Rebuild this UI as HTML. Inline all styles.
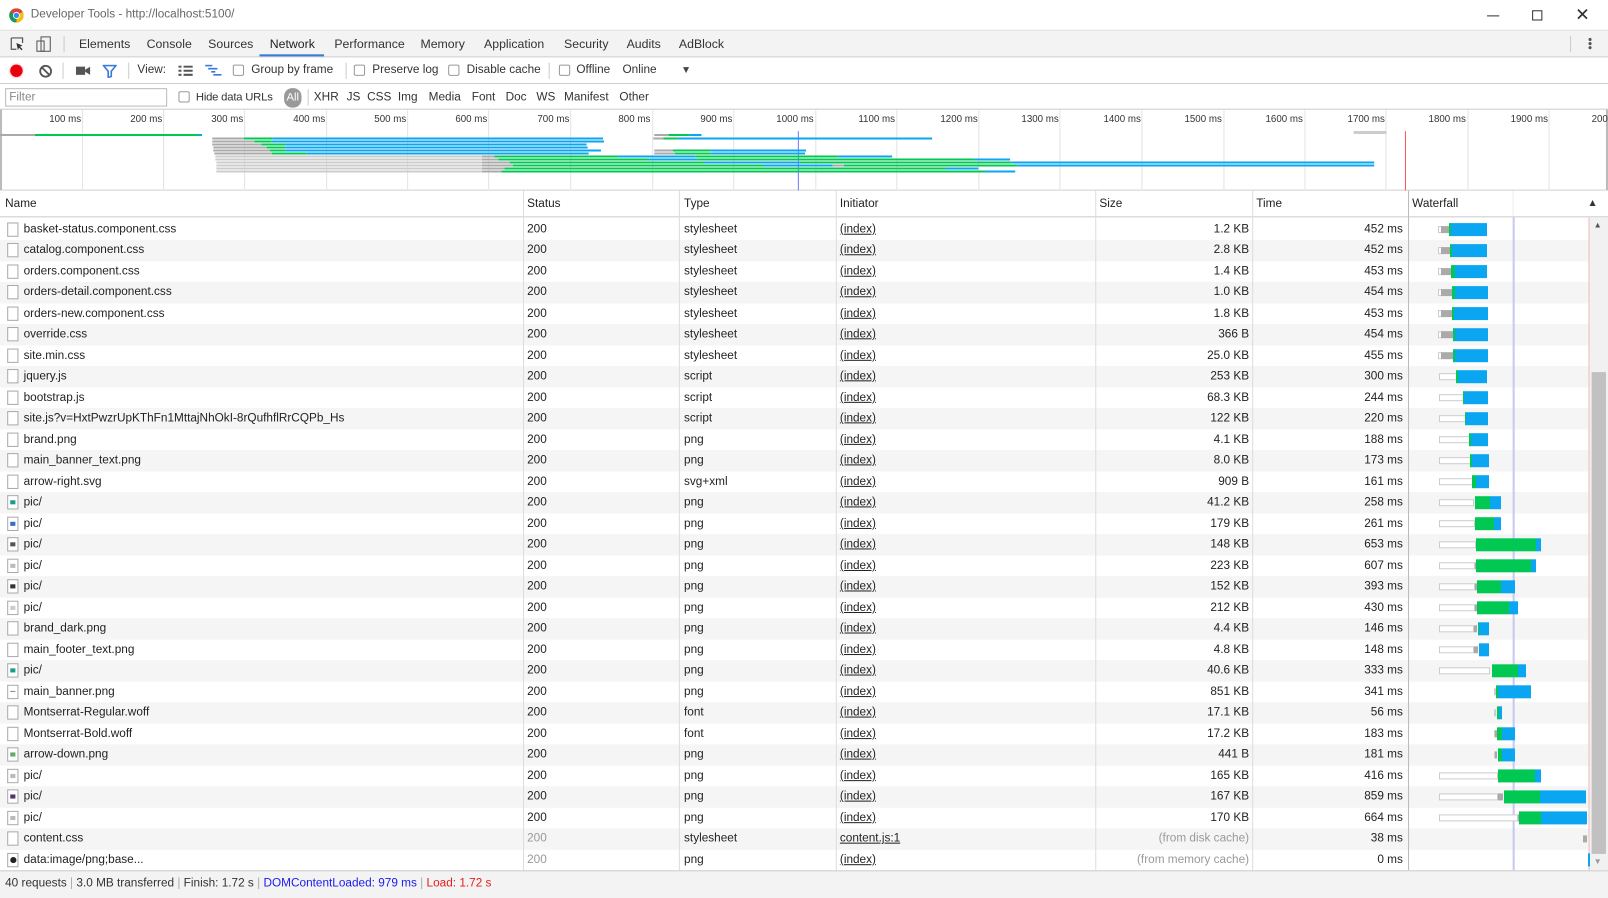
<!DOCTYPE html>
<html><head><meta charset="utf-8"><style>
*{box-sizing:border-box;margin:0;padding:0}
body{width:1608px;height:898px;overflow:hidden;background:#fff;font-family:"Liberation Sans",sans-serif;font-size:11.5px;color:#222;position:relative}
#c{position:absolute;left:0;top:0;width:1568px;height:876px;transform:scale(1.02551,1.02511);transform-origin:0 0}
.a{position:absolute;white-space:nowrap}
.t{position:absolute;top:36px;font-size:12px;color:#333}
.tb{position:absolute;top:62px;font-size:11.5px;color:#333}
.cb{position:absolute;width:11px;height:11px;border:1px solid #999;border-radius:2px;background:#fff}
.sep{position:absolute;width:1px;background:#ccc}
.ft{position:absolute;top:89px;font-size:11.5px;color:#333}
.row{position:absolute;left:0;width:1550px;height:20.5px;font-size:11.5px;line-height:20.5px}
.row.g{background:#f5f5f5}
.row span{position:absolute;top:0}
.n{left:23px}.s{left:514px}.ty{left:667px}.i{left:819px;text-decoration:underline}
.sz{right:332px;text-align:right}.tm{right:182px;text-align:right}
.ic{position:absolute;left:7px;top:3px;width:11px;height:14px;border:1px solid #aaa;background:#fff}
.ic i{position:absolute;left:2px;top:4px;width:5px;height:4px}
.gr{color:#999}
.ov{position:absolute;top:111px;font-size:9.5px;color:#333}
.h{position:absolute;top:193px;font-size:11.5px}
</style></head><body>
<div id="c">
<div class="a" style="left:0;top:0;width:1568px;height:30px;background:#fff;border-bottom:1px solid #ddd"></div>
<svg class="a" style="left:9px;top:8px" width="14" height="14" viewBox="0 0 14 14"><circle cx="7" cy="7" r="7" fill="#db4437"/><path d="M7 7 L13.1 3.5 A7 7 0 0 1 7 14Z" fill="#f4c20d"/><path d="M7 7 L7 14 A7 7 0 0 1 0.9 3.5Z" fill="#0f9d58"/><circle cx="7" cy="7" r="3.4" fill="#fff"/><circle cx="7" cy="7" r="2.6" fill="#4285f4"/></svg>
<div class="a" style="left:30px;top:8px;font-size:11.5px;color:#666">Developer Tools - http://localhost:5100/</div>
<div class="a" style="left:1450px;top:15px;width:12px;height:1px;background:#333"></div>
<div class="a" style="left:1494px;top:10px;width:10px;height:10px;border:1px solid #333"></div>
<div class="a" style="left:1536px;top:5px;font-size:17px;color:#333">✕</div>
<div class="a" style="left:0;top:30px;width:1568px;height:26px;background:#f3f3f3;border-bottom:1px solid #ccc"></div>
<svg class="a" style="left:10px;top:36px" width="14" height="14" viewBox="0 0 14 14"><path d="M1 1h11v5M1 1v11h5" fill="none" stroke="#555" stroke-width="1.2"/><path d="M6 6l6 2.5-2.5 1L12 12l-1 1-2.5-2.5-1 2.5z" fill="#333"/></svg>
<svg class="a" style="left:35px;top:35px" width="16" height="16" viewBox="0 0 16 16"><rect x="1" y="5" width="7" height="10" fill="none" stroke="#555"/><rect x="5" y="1" width="9" height="14" fill="none" stroke="#555"/></svg>
<div class="sep" style="left:62px;top:35px;height:16px"></div>
<div class="t" style="left:77px">Elements</div><div class="t" style="left:143px">Console</div><div class="t" style="left:203px">Sources</div><div class="t" style="left:263px;color:#222">Network</div><div class="t" style="left:326px">Performance</div><div class="t" style="left:410px">Memory</div><div class="t" style="left:472px">Application</div><div class="t" style="left:550px">Security</div><div class="t" style="left:611px">Audits</div><div class="t" style="left:662px">AdBlock</div>
<div class="a" style="left:253px;top:53px;width:63px;height:2px;background:#3879d9"></div>
<div class="sep" style="left:1531px;top:35px;height:16px"></div>
<div class="a" style="left:1549px;top:37px;width:3px;height:3px;background:#555;border-radius:50%;box-shadow:0 4px 0 #555,0 8px 0 #555"></div>
<div class="a" style="left:0;top:56px;width:1568px;height:26px;background:#fff;border-bottom:1px solid #ccc"></div>
<div class="a" style="left:10px;top:63px;width:12px;height:12px;border-radius:50%;background:#e8000d;box-shadow:0 0 2px #f66"></div>
<svg class="a" style="left:38px;top:63px" width="13" height="13" viewBox="0 0 13 13"><circle cx="6.5" cy="6.5" r="5.3" fill="none" stroke="#555" stroke-width="1.8"/><path d="M3 3l7 7" stroke="#555" stroke-width="1.8"/></svg>
<div class="sep" style="left:61px;top:61px;height:16px"></div>
<svg class="a" style="left:74px;top:64px" width="14" height="10" viewBox="0 0 14 10"><rect x="0" y="1" width="9" height="8" fill="#555"/><path d="M9 4l5-3v8l-5-3z" fill="#555"/></svg>
<svg class="a" style="left:100px;top:63px" width="14" height="13" viewBox="0 0 14 13"><path d="M1 1h12l-4.5 5.5v5l-3 1.5v-6.5z" fill="none" stroke="#3879d9" stroke-width="1.6"/></svg>
<div class="sep" style="left:125px;top:61px;height:16px"></div>
<div class="tb" style="left:134px">View:</div>
<svg class="a" style="left:174px;top:64px" width="14" height="11" viewBox="0 0 14 11"><path d="M0 1h3M5 1h9M0 5h3M5 5h9M0 9h3M5 9h9" stroke="#555" stroke-width="2"/></svg>
<svg class="a" style="left:200px;top:63px" width="16" height="12" viewBox="0 0 16 12"><path d="M0 1h7M3 4h9M6 7h4M8 10h8" stroke="#3879d9" stroke-width="1.6"/></svg>
<div class="cb" style="left:227px;top:63px"></div><div class="tb" style="left:245px">Group by frame</div>
<div class="sep" style="left:337px;top:61px;height:16px"></div>
<div class="cb" style="left:345px;top:63px"></div><div class="tb" style="left:363px">Preserve log</div>
<div class="cb" style="left:437px;top:63px"></div><div class="tb" style="left:455px">Disable cache</div>
<div class="sep" style="left:535px;top:61px;height:16px"></div>
<div class="cb" style="left:545px;top:63px"></div><div class="tb" style="left:562px">Offline</div>
<div class="tb" style="left:607px">Online</div>
<div class="tb" style="left:664px;font-size:10px;top:63px;color:#444">▼</div>
<div class="a" style="left:0;top:82px;width:1568px;height:25px;background:#fff;border-bottom:1px solid #ccc"></div>
<div class="a" style="left:5px;top:86px;width:158px;height:18px;border:1px solid #bbb;font-size:11.5px;color:#888;padding:2px 3px">Filter</div>
<div class="cb" style="left:174px;top:89px"></div><div class="ft" style="left:191px;font-size:11px;letter-spacing:-0.2px">Hide data URLs</div>
<div class="a" style="left:277px;top:86px;width:17px;height:19px;border-radius:8px;background:#999;color:#fff;font-size:11px;text-align:center;line-height:19px">All</div>
<div class="sep" style="left:300px;top:87px;height:16px"></div>
<div class="ft" style="left:306px">XHR</div><div class="ft" style="left:338px">JS</div><div class="ft" style="left:358px">CSS</div><div class="ft" style="left:388px">Img</div><div class="ft" style="left:418px">Media</div><div class="ft" style="left:460px">Font</div><div class="ft" style="left:493px">Doc</div><div class="ft" style="left:523px">WS</div><div class="ft" style="left:550px">Manifest</div><div class="ft" style="left:604px">Other</div>
<div class="a" style="left:0;top:107px;width:1568px;height:79px;border-left:2px solid #bbb;border-right:2px solid #bbb;border-bottom:1px solid #ccc"></div>
<div class="a" style="left:80px;top:107px;width:1px;height:79px;background:#e3e3e3;box-shadow:79px 0 #e3e3e3,158px 0 #e3e3e3,238px 0 #e3e3e3,317px 0 #e3e3e3,396px 0 #e3e3e3,476px 0 #e3e3e3,556px 0 #e3e3e3,635px 0 #e3e3e3,715px 0 #e3e3e3,794px 0 #e3e3e3,874px 0 #e3e3e3,953px 0 #e3e3e3,1033px 0 #e3e3e3,1113px 0 #e3e3e3,1192px 0 #e3e3e3,1271px 0 #e3e3e3,1351px 0 #e3e3e3,1430px 0 #e3e3e3"></div>
<div class="ov" style="left:48px">100 ms</div><div class="ov" style="left:127px">200 ms</div><div class="ov" style="left:206px">300 ms</div><div class="ov" style="left:286px">400 ms</div><div class="ov" style="left:365px">500 ms</div><div class="ov" style="left:444px">600 ms</div><div class="ov" style="left:524px">700 ms</div><div class="ov" style="left:603px">800 ms</div><div class="ov" style="left:683px">900 ms</div><div class="ov" style="left:757px">1000 ms</div><div class="ov" style="left:837px">1100 ms</div><div class="ov" style="left:917px">1200 ms</div><div class="ov" style="left:996px">1300 ms</div><div class="ov" style="left:1076px">1400 ms</div><div class="ov" style="left:1155px">1500 ms</div><div class="ov" style="left:1234px">1600 ms</div><div class="ov" style="left:1314px">1700 ms</div><div class="ov" style="left:1393px">1800 ms</div><div class="ov" style="left:1473px">1900 ms</div><div class="ov" style="left:1552px">200</div>
<div class="a" style="left:778px;top:128px;width:1px;height:58px;background:#77f"></div>
<div class="a" style="left:1370px;top:128px;width:1px;height:58px;background:#f55"></div>
<div class="a" style="left:0;top:186px;width:1568px;height:26px;background:#fff;border-bottom:1px solid #ccc"></div>
<div class="h" style="left:5px">Name</div><div class="h" style="left:514px">Status</div><div class="h" style="left:667px">Type</div><div class="h" style="left:819px">Initiator</div><div class="h" style="left:1072px">Size</div><div class="h" style="left:1225px">Time</div><div class="h" style="left:1377px">Waterfall</div>
<div class="a" style="left:1548px;top:193px;font-size:10px;color:#333">▲</div>
<div class="row" style="top:213.75px"><div class="ic"></div><span class="n">basket-status.component.css</span><span class="s">200</span><span class="ty">stylesheet</span><span class="i">(index)</span><span class="sz">1.2 KB</span><span class="tm">452 ms</span></div>
<div class="row g" style="top:234.25px"><div class="ic"></div><span class="n">catalog.component.css</span><span class="s">200</span><span class="ty">stylesheet</span><span class="i">(index)</span><span class="sz">2.8 KB</span><span class="tm">452 ms</span></div>
<div class="row" style="top:254.75px"><div class="ic"></div><span class="n">orders.component.css</span><span class="s">200</span><span class="ty">stylesheet</span><span class="i">(index)</span><span class="sz">1.4 KB</span><span class="tm">453 ms</span></div>
<div class="row g" style="top:275.25px"><div class="ic"></div><span class="n">orders-detail.component.css</span><span class="s">200</span><span class="ty">stylesheet</span><span class="i">(index)</span><span class="sz">1.0 KB</span><span class="tm">454 ms</span></div>
<div class="row" style="top:295.75px"><div class="ic"></div><span class="n">orders-new.component.css</span><span class="s">200</span><span class="ty">stylesheet</span><span class="i">(index)</span><span class="sz">1.8 KB</span><span class="tm">453 ms</span></div>
<div class="row g" style="top:316.25px"><div class="ic"></div><span class="n">override.css</span><span class="s">200</span><span class="ty">stylesheet</span><span class="i">(index)</span><span class="sz">366 B</span><span class="tm">454 ms</span></div>
<div class="row" style="top:336.75px"><div class="ic"></div><span class="n">site.min.css</span><span class="s">200</span><span class="ty">stylesheet</span><span class="i">(index)</span><span class="sz">25.0 KB</span><span class="tm">455 ms</span></div>
<div class="row g" style="top:357.25px"><div class="ic"></div><span class="n">jquery.js</span><span class="s">200</span><span class="ty">script</span><span class="i">(index)</span><span class="sz">253 KB</span><span class="tm">300 ms</span></div>
<div class="row" style="top:377.75px"><div class="ic"></div><span class="n">bootstrap.js</span><span class="s">200</span><span class="ty">script</span><span class="i">(index)</span><span class="sz">68.3 KB</span><span class="tm">244 ms</span></div>
<div class="row g" style="top:398.25px"><div class="ic"></div><span class="n">site.js?v=HxtPwzrUpKThFn1MttajNhOkI-8rQufhflRrCQPb_Hs</span><span class="s">200</span><span class="ty">script</span><span class="i">(index)</span><span class="sz">122 KB</span><span class="tm">220 ms</span></div>
<div class="row" style="top:418.75px"><div class="ic"></div><span class="n">brand.png</span><span class="s">200</span><span class="ty">png</span><span class="i">(index)</span><span class="sz">4.1 KB</span><span class="tm">188 ms</span></div>
<div class="row g" style="top:439.25px"><div class="ic"></div><span class="n">main_banner_text.png</span><span class="s">200</span><span class="ty">png</span><span class="i">(index)</span><span class="sz">8.0 KB</span><span class="tm">173 ms</span></div>
<div class="row" style="top:459.75px"><div class="ic"></div><span class="n">arrow-right.svg</span><span class="s">200</span><span class="ty">svg+xml</span><span class="i">(index)</span><span class="sz">909 B</span><span class="tm">161 ms</span></div>
<div class="row g" style="top:480.25px"><div class="ic"><i style="background:#1a9a8a"></i></div><span class="n">pic/</span><span class="s">200</span><span class="ty">png</span><span class="i">(index)</span><span class="sz">41.2 KB</span><span class="tm">258 ms</span></div>
<div class="row" style="top:500.75px"><div class="ic"><i style="background:#3b6fc4"></i></div><span class="n">pic/</span><span class="s">200</span><span class="ty">png</span><span class="i">(index)</span><span class="sz">179 KB</span><span class="tm">261 ms</span></div>
<div class="row g" style="top:521.25px"><div class="ic"><i style="background:#555"></i></div><span class="n">pic/</span><span class="s">200</span><span class="ty">png</span><span class="i">(index)</span><span class="sz">148 KB</span><span class="tm">653 ms</span></div>
<div class="row" style="top:541.75px"><div class="ic"><i style="background:#bbb"></i></div><span class="n">pic/</span><span class="s">200</span><span class="ty">png</span><span class="i">(index)</span><span class="sz">223 KB</span><span class="tm">607 ms</span></div>
<div class="row g" style="top:562.25px"><div class="ic"><i style="background:#333"></i></div><span class="n">pic/</span><span class="s">200</span><span class="ty">png</span><span class="i">(index)</span><span class="sz">152 KB</span><span class="tm">393 ms</span></div>
<div class="row" style="top:582.75px"><div class="ic"><i style="background:#ccc"></i></div><span class="n">pic/</span><span class="s">200</span><span class="ty">png</span><span class="i">(index)</span><span class="sz">212 KB</span><span class="tm">430 ms</span></div>
<div class="row g" style="top:603.25px"><div class="ic"></div><span class="n">brand_dark.png</span><span class="s">200</span><span class="ty">png</span><span class="i">(index)</span><span class="sz">4.4 KB</span><span class="tm">146 ms</span></div>
<div class="row" style="top:623.75px"><div class="ic"></div><span class="n">main_footer_text.png</span><span class="s">200</span><span class="ty">png</span><span class="i">(index)</span><span class="sz">4.8 KB</span><span class="tm">148 ms</span></div>
<div class="row g" style="top:644.25px"><div class="ic"><i style="background:#1a9a8a"></i></div><span class="n">pic/</span><span class="s">200</span><span class="ty">png</span><span class="i">(index)</span><span class="sz">40.6 KB</span><span class="tm">333 ms</span></div>
<div class="row" style="top:664.75px"><div class="ic"><i style="background:#888;height:1px;top:5px"></i></div><span class="n">main_banner.png</span><span class="s">200</span><span class="ty">png</span><span class="i">(index)</span><span class="sz">851 KB</span><span class="tm">341 ms</span></div>
<div class="row g" style="top:685.25px"><div class="ic"></div><span class="n">Montserrat-Regular.woff</span><span class="s">200</span><span class="ty">font</span><span class="i">(index)</span><span class="sz">17.1 KB</span><span class="tm">56 ms</span></div>
<div class="row" style="top:705.75px"><div class="ic"></div><span class="n">Montserrat-Bold.woff</span><span class="s">200</span><span class="ty">font</span><span class="i">(index)</span><span class="sz">17.2 KB</span><span class="tm">183 ms</span></div>
<div class="row g" style="top:726.25px"><div class="ic"><i style="background:#6a6"></i></div><span class="n">arrow-down.png</span><span class="s">200</span><span class="ty">png</span><span class="i">(index)</span><span class="sz">441 B</span><span class="tm">181 ms</span></div>
<div class="row" style="top:746.75px"><div class="ic"><i style="background:#bbb"></i></div><span class="n">pic/</span><span class="s">200</span><span class="ty">png</span><span class="i">(index)</span><span class="sz">165 KB</span><span class="tm">416 ms</span></div>
<div class="row g" style="top:767.25px"><div class="ic"><i style="background:#536"></i></div><span class="n">pic/</span><span class="s">200</span><span class="ty">png</span><span class="i">(index)</span><span class="sz">167 KB</span><span class="tm">859 ms</span></div>
<div class="row" style="top:787.75px"><div class="ic"><i style="background:#bbb"></i></div><span class="n">pic/</span><span class="s">200</span><span class="ty">png</span><span class="i">(index)</span><span class="sz">170 KB</span><span class="tm">664 ms</span></div>
<div class="row g" style="top:808.25px"><div class="ic"></div><span class="n">content.css</span><span class="s gr">200</span><span class="ty">stylesheet</span><span class="i">content.js:1</span><span class="sz gr">(from disk cache)</span><span class="tm">38 ms</span></div>
<div class="row" style="top:828.75px"><div class="ic"><i style="background:#222;border-radius:50%;width:6px;height:6px;top:3px"></i></div><span class="n">data:image/png;base...</span><span class="s gr">200</span><span class="ty">png</span><span class="i">(index)</span><span class="sz gr">(from memory cache)</span><span class="tm">0 ms</span></div>
<div class="a" style="left:510px;top:186px;width:1px;height:663px;background:#ddd;box-shadow:152px 0 #ddd,305px 0 #ddd,558px 0 #ddd,711px 0 #ddd"></div>
<div class="a" style="left:1373px;top:186px;width:1px;height:663px;background:#bbb"></div>
<div class="a" style="left:1475px;top:186px;width:1px;height:25px;background:#eee"></div>
<div class="a" style="left:1475px;top:212px;width:2px;height:637px;background:#c8c8f4"></div>
<div class="a" style="left:1549px;top:212px;width:1px;height:637px;background:#f2b8b8"></div>
<div class="a" style="left:1550px;top:212px;width:18px;height:637px;background:#f1f1f1"></div>
<div class="a" style="left:1552px;top:363px;width:14px;height:470px;background:#c1c1c1"></div>
<div class="a" style="left:1554px;top:215px;font-size:8px;color:#555">▲</div>
<div class="a" style="left:1554px;top:836px;font-size:8px;color:#999">▼</div>
<div class="a" style="left:0;top:849px;width:1568px;height:27px;background:#f3f3f3;border-top:1px solid #ccc"></div>
<div class="a" style="left:5px;top:856px;font-size:11.5px;color:#333">40 requests <span style="color:#aaa">|</span> 3.0 MB transferred <span style="color:#aaa">|</span> Finish: 1.72 s <span style="color:#aaa">|</span> <span style="color:#1a1aef">DOMContentLoaded: 979 ms</span> <span style="color:#aaa">|</span> <span style="color:#e51c1c">Load: 1.72 s</span></div>
</div>
<svg class="a" style="left:0;top:0" width="1608" height="898">
<g transform="scale(1.02551,1)">
<rect x="1320" y="131" width="32" height="3" fill="#ccc"/>
<g transform="translate(0,134)"><rect x="0" width="34" height="2" fill="#aaa"/><rect x="34" width="160" height="2" fill="#00c853"/><rect x="194" width="3" height="2" fill="#0ba6f2"/><rect x="638" width="14" height="2" fill="#aaa"/><rect x="652" width="20" height="2" fill="#00c853"/><rect x="672" width="12" height="2" fill="#0ba6f2"/></g>
<g transform="translate(0,137.5)"><rect x="207" width="31" height="2" fill="#aaa"/><rect x="238" width="28" height="2" fill="#00c853"/><rect x="266" width="322" height="2" fill="#0ba6f2"/><rect x="637" width="10" height="2" fill="#aaa"/><rect x="647" width="14" height="2" fill="#00c853"/><rect x="661" width="248" height="2" fill="#0ba6f2"/></g>
<g transform="translate(0,140.5)"><rect x="207" width="41" height="2" fill="#aaa"/><rect x="248" width="17" height="2" fill="#00c853"/><rect x="265" width="324" height="2" fill="#0ba6f2"/></g>
<g transform="translate(0,143.5)"><rect x="207" width="48" height="2" fill="#aaa"/><rect x="255" width="23" height="2" fill="#00c853"/><rect x="278" width="294" height="2" fill="#0ba6f2"/></g>
<g transform="translate(0,146.5)"><rect x="208" width="52" height="2" fill="#aaa"/><rect x="260" width="18" height="2" fill="#00c853"/><rect x="278" width="295" height="2" fill="#0ba6f2"/></g>
<g transform="translate(0,149.5)"><rect x="208" width="55" height="2" fill="#aaa"/><rect x="263" width="15" height="2" fill="#00c853"/><rect x="278" width="308" height="2" fill="#0ba6f2"/><rect x="638" width="18" height="2" fill="#aaa"/><rect x="656" width="37" height="2" fill="#00c853"/><rect x="693" width="93" height="2" fill="#0ba6f2"/></g>
<g transform="translate(0,152.5)"><rect x="209" width="56" height="2" fill="#aaa"/><rect x="265" width="34" height="2" fill="#00c853"/><rect x="299" width="275" height="2" fill="#0ba6f2"/><rect x="638" width="20" height="2" fill="#aaa"/><rect x="658" width="35" height="2" fill="#00c853"/><rect x="693" width="92" height="2" fill="#0ba6f2"/></g>
<g transform="translate(0,155.5)"><rect x="210" width="260" height="2" fill="#ccc"/><rect x="470" width="12" height="2" fill="#aaa"/><rect x="482" width="121" height="2" fill="#00c853"/><rect x="603" width="75" height="2" fill="#0ba6f2"/><rect x="678" width="139" height="2" fill="#00c853"/><rect x="817" width="53" height="2" fill="#0ba6f2"/></g>
<g transform="translate(0,158.5)"><rect x="210" width="260" height="2" fill="#ccc"/><rect x="470" width="16" height="2" fill="#aaa"/><rect x="486" width="147" height="2" fill="#00c853"/><rect x="633" width="47" height="2" fill="#0ba6f2"/><rect x="680" width="270" height="2" fill="#00c853"/><rect x="950" width="35" height="2" fill="#0ba6f2"/></g>
<g transform="translate(0,161.5)"><rect x="211" width="259" height="2" fill="#ccc"/><rect x="470" width="27" height="2" fill="#aaa"/><rect x="497" width="189" height="2" fill="#00c853"/><rect x="686" width="94" height="2" fill="#0ba6f2"/><rect x="780" width="206" height="2" fill="#00c853"/><rect x="986" width="354" height="2" fill="#0ba6f2"/></g>
<g transform="translate(0,164.5)"><rect x="211" width="259" height="2" fill="#ccc"/><rect x="470" width="30" height="2" fill="#aaa"/><rect x="500" width="245" height="2" fill="#00c853"/><rect x="745" width="67" height="2" fill="#0ba6f2"/><rect x="812" width="11" height="2" fill="#aaa"/><rect x="823" width="169" height="2" fill="#00c853"/><rect x="992" width="348" height="2" fill="#0ba6f2"/></g>
<g transform="translate(0,167.5)"><rect x="211" width="259" height="2" fill="#ccc"/><rect x="470" width="22" height="2" fill="#aaa"/><rect x="492" width="430" height="2" fill="#00c853"/><rect x="922" width="32" height="2" fill="#0ba6f2"/></g>
<g transform="translate(0,170.5)"><rect x="211" width="259" height="2" fill="#ccc"/><rect x="470" width="19" height="2" fill="#aaa"/><rect x="489" width="471" height="2" fill="#00c853"/><rect x="960" width="30" height="2" fill="#0ba6f2"/></g>
</g>
<defs><style>.o{fill:#fff;stroke:#ccc;stroke-width:1}.q{fill:#aaa}.G{fill:#00c853}.B{fill:#0ba6f2}</style></defs>
<g transform="translate(0,229.6)"><rect class="o" x="1438.5" y="-3" width="3" height="6"/><rect class="q" x="1441" y="-3.5" width="8" height="7"/><rect class="G" x="1449" y="-6.5" width="2" height="13"/><rect class="B" x="1451" y="-6.5" width="36" height="13"/></g>
<g transform="translate(0,250.6)"><rect class="o" x="1438.5" y="-3" width="3" height="6"/><rect class="q" x="1441" y="-3.5" width="9" height="7"/><rect class="G" x="1450" y="-6.5" width="2" height="13"/><rect class="B" x="1452" y="-6.5" width="35" height="13"/></g>
<g transform="translate(0,271.6)"><rect class="o" x="1438.5" y="-3" width="3" height="6"/><rect class="q" x="1441" y="-3.5" width="10" height="7"/><rect class="G" x="1451" y="-6.5" width="4" height="13"/><rect class="B" x="1455" y="-6.5" width="32" height="13"/></g>
<g transform="translate(0,292.6)"><rect class="o" x="1438.5" y="-3" width="3" height="6"/><rect class="q" x="1441" y="-3.5" width="11" height="7"/><rect class="G" x="1452" y="-6.5" width="3" height="13"/><rect class="B" x="1455" y="-6.5" width="33" height="13"/></g>
<g transform="translate(0,313.6)"><rect class="o" x="1438.5" y="-3" width="3" height="6"/><rect class="q" x="1441" y="-3.5" width="11" height="7"/><rect class="G" x="1452" y="-6.5" width="2" height="13"/><rect class="B" x="1454" y="-6.5" width="34" height="13"/></g>
<g transform="translate(0,334.7)"><rect class="o" x="1438.5" y="-3" width="3" height="6"/><rect class="q" x="1441" y="-3.5" width="12" height="7"/><rect class="G" x="1453" y="-6.5" width="2" height="13"/><rect class="B" x="1455" y="-6.5" width="33" height="13"/></g>
<g transform="translate(0,355.7)"><rect class="o" x="1438.5" y="-3" width="3" height="6"/><rect class="q" x="1441" y="-3.5" width="12" height="7"/><rect class="G" x="1453" y="-6.5" width="2" height="13"/><rect class="B" x="1455" y="-6.5" width="33" height="13"/></g>
<g transform="translate(0,376.7)"><rect class="o" x="1439.5" y="-3" width="17" height="6"/><rect class="G" x="1456" y="-6.5" width="2" height="13"/><rect class="B" x="1458" y="-6.5" width="29" height="13"/></g>
<g transform="translate(0,397.7)"><rect class="o" x="1439.5" y="-3" width="24" height="6"/><rect class="G" x="1463" y="-6.5" width="1" height="13"/><rect class="B" x="1464" y="-6.5" width="24" height="13"/></g>
<g transform="translate(0,418.7)"><rect class="o" x="1439.5" y="-3" width="26" height="6"/><rect class="G" x="1465" y="-6.5" width="1" height="13"/><rect class="B" x="1466" y="-6.5" width="22" height="13"/></g>
<g transform="translate(0,439.7)"><rect class="o" x="1439.5" y="-3" width="30" height="6"/><rect class="G" x="1469" y="-6.5" width="2" height="13"/><rect class="B" x="1471" y="-6.5" width="17" height="13"/></g>
<g transform="translate(0,460.7)"><rect class="o" x="1439.5" y="-3" width="31" height="6"/><rect class="G" x="1470" y="-6.5" width="2" height="13"/><rect class="B" x="1472" y="-6.5" width="17" height="13"/></g>
<g transform="translate(0,481.7)"><rect class="o" x="1439.5" y="-3" width="33" height="6"/><rect class="G" x="1472" y="-6.5" width="4" height="13"/><rect class="B" x="1476" y="-6.5" width="13" height="13"/></g>
<g transform="translate(0,502.7)"><rect class="o" x="1439.5" y="-3" width="34" height="6"/><rect class="G" x="1475" y="-6.5" width="15" height="13"/><rect class="B" x="1490" y="-6.5" width="11" height="13"/></g>
<g transform="translate(0,523.7)"><rect class="o" x="1439.5" y="-3" width="35" height="6"/><rect class="G" x="1475" y="-6.5" width="19" height="13"/><rect class="B" x="1494" y="-6.5" width="7" height="13"/></g>
<g transform="translate(0,544.8)"><rect class="o" x="1439.5" y="-3" width="36" height="6"/><rect class="G" x="1476" y="-6.5" width="60" height="13"/><rect class="B" x="1536" y="-6.5" width="5" height="13"/></g>
<g transform="translate(0,565.8)"><rect class="o" x="1439.5" y="-3" width="35" height="6"/><rect class="q" x="1475" y="-3.5" width="1" height="7"/><rect class="G" x="1476" y="-6.5" width="55" height="13"/><rect class="B" x="1531" y="-6.5" width="5" height="13"/></g>
<g transform="translate(0,586.8)"><rect class="o" x="1439.5" y="-3" width="35" height="6"/><rect class="q" x="1475" y="-3.5" width="2" height="7"/><rect class="G" x="1477" y="-6.5" width="24" height="13"/><rect class="B" x="1501" y="-6.5" width="14" height="13"/></g>
<g transform="translate(0,607.8)"><rect class="o" x="1439.5" y="-3" width="35" height="6"/><rect class="q" x="1475" y="-3.5" width="2" height="7"/><rect class="G" x="1477" y="-6.5" width="32" height="13"/><rect class="B" x="1509" y="-6.5" width="9" height="13"/></g>
<g transform="translate(0,628.8)"><rect class="o" x="1439.5" y="-3" width="34" height="6"/><rect class="q" x="1474" y="-3.5" width="3" height="7"/><rect class="G" x="1478" y="-6.5" width="1" height="13"/><rect class="B" x="1479" y="-6.5" width="10" height="13"/></g>
<g transform="translate(0,649.8)"><rect class="o" x="1439.5" y="-3" width="34" height="6"/><rect class="q" x="1474" y="-3.5" width="4" height="7"/><rect class="B" x="1479" y="-6.5" width="10" height="13"/></g>
<g transform="translate(0,670.8)"><rect class="o" x="1439.5" y="-3" width="50" height="6"/><rect class="G" x="1492" y="-6.5" width="26" height="13"/><rect class="B" x="1518" y="-6.5" width="8" height="13"/></g>
<g transform="translate(0,691.8)"><rect class="o" x="1494.5" y="-3" width="1" height="6"/><rect class="G" x="1496" y="-6.5" width="2" height="13"/><rect class="B" x="1498" y="-6.5" width="33" height="13"/></g>
<g transform="translate(0,712.8)"><rect class="o" x="1494.5" y="-3" width="1" height="6"/><rect class="G" x="1497" y="-6.5" width="2" height="13"/><rect class="B" x="1499" y="-6.5" width="3" height="13"/></g>
<g transform="translate(0,733.8)"><rect class="o" x="1494.5" y="-3" width="1" height="6"/><rect class="q" x="1495" y="-3.5" width="2" height="7"/><rect class="G" x="1497" y="-6.5" width="5" height="13"/><rect class="B" x="1502" y="-6.5" width="13" height="13"/></g>
<g transform="translate(0,754.9)"><rect class="o" x="1494.5" y="-3" width="1" height="6"/><rect class="q" x="1495" y="-3.5" width="2" height="7"/><rect class="G" x="1498" y="-6.5" width="4" height="13"/><rect class="B" x="1502" y="-6.5" width="13" height="13"/></g>
<g transform="translate(0,775.9)"><rect class="o" x="1439.5" y="-3" width="58" height="6"/><rect class="G" x="1498" y="-6.5" width="37" height="13"/><rect class="B" x="1535" y="-6.5" width="6" height="13"/></g>
<g transform="translate(0,796.9)"><rect class="o" x="1439.5" y="-3" width="58" height="6"/><rect class="q" x="1498" y="-3.5" width="5" height="7"/><rect class="G" x="1504" y="-6.5" width="36" height="13"/><rect class="B" x="1540" y="-6.5" width="46" height="13"/></g>
<g transform="translate(0,817.9)"><rect class="o" x="1439.5" y="-3" width="78" height="6"/><rect class="q" x="1518" y="-3.5" width="1" height="7"/><rect class="G" x="1519" y="-6.5" width="22" height="13"/><rect class="B" x="1541" y="-6.5" width="46" height="13"/></g>
<g transform="translate(0,838.9)"><rect class="q" x="1583" y="-3.5" width="4" height="7"/></g>
<g transform="translate(0,859.9)"><rect class="B" x="1588" y="-6.5" width="2" height="13"/></g>
</svg>
</body></html>
